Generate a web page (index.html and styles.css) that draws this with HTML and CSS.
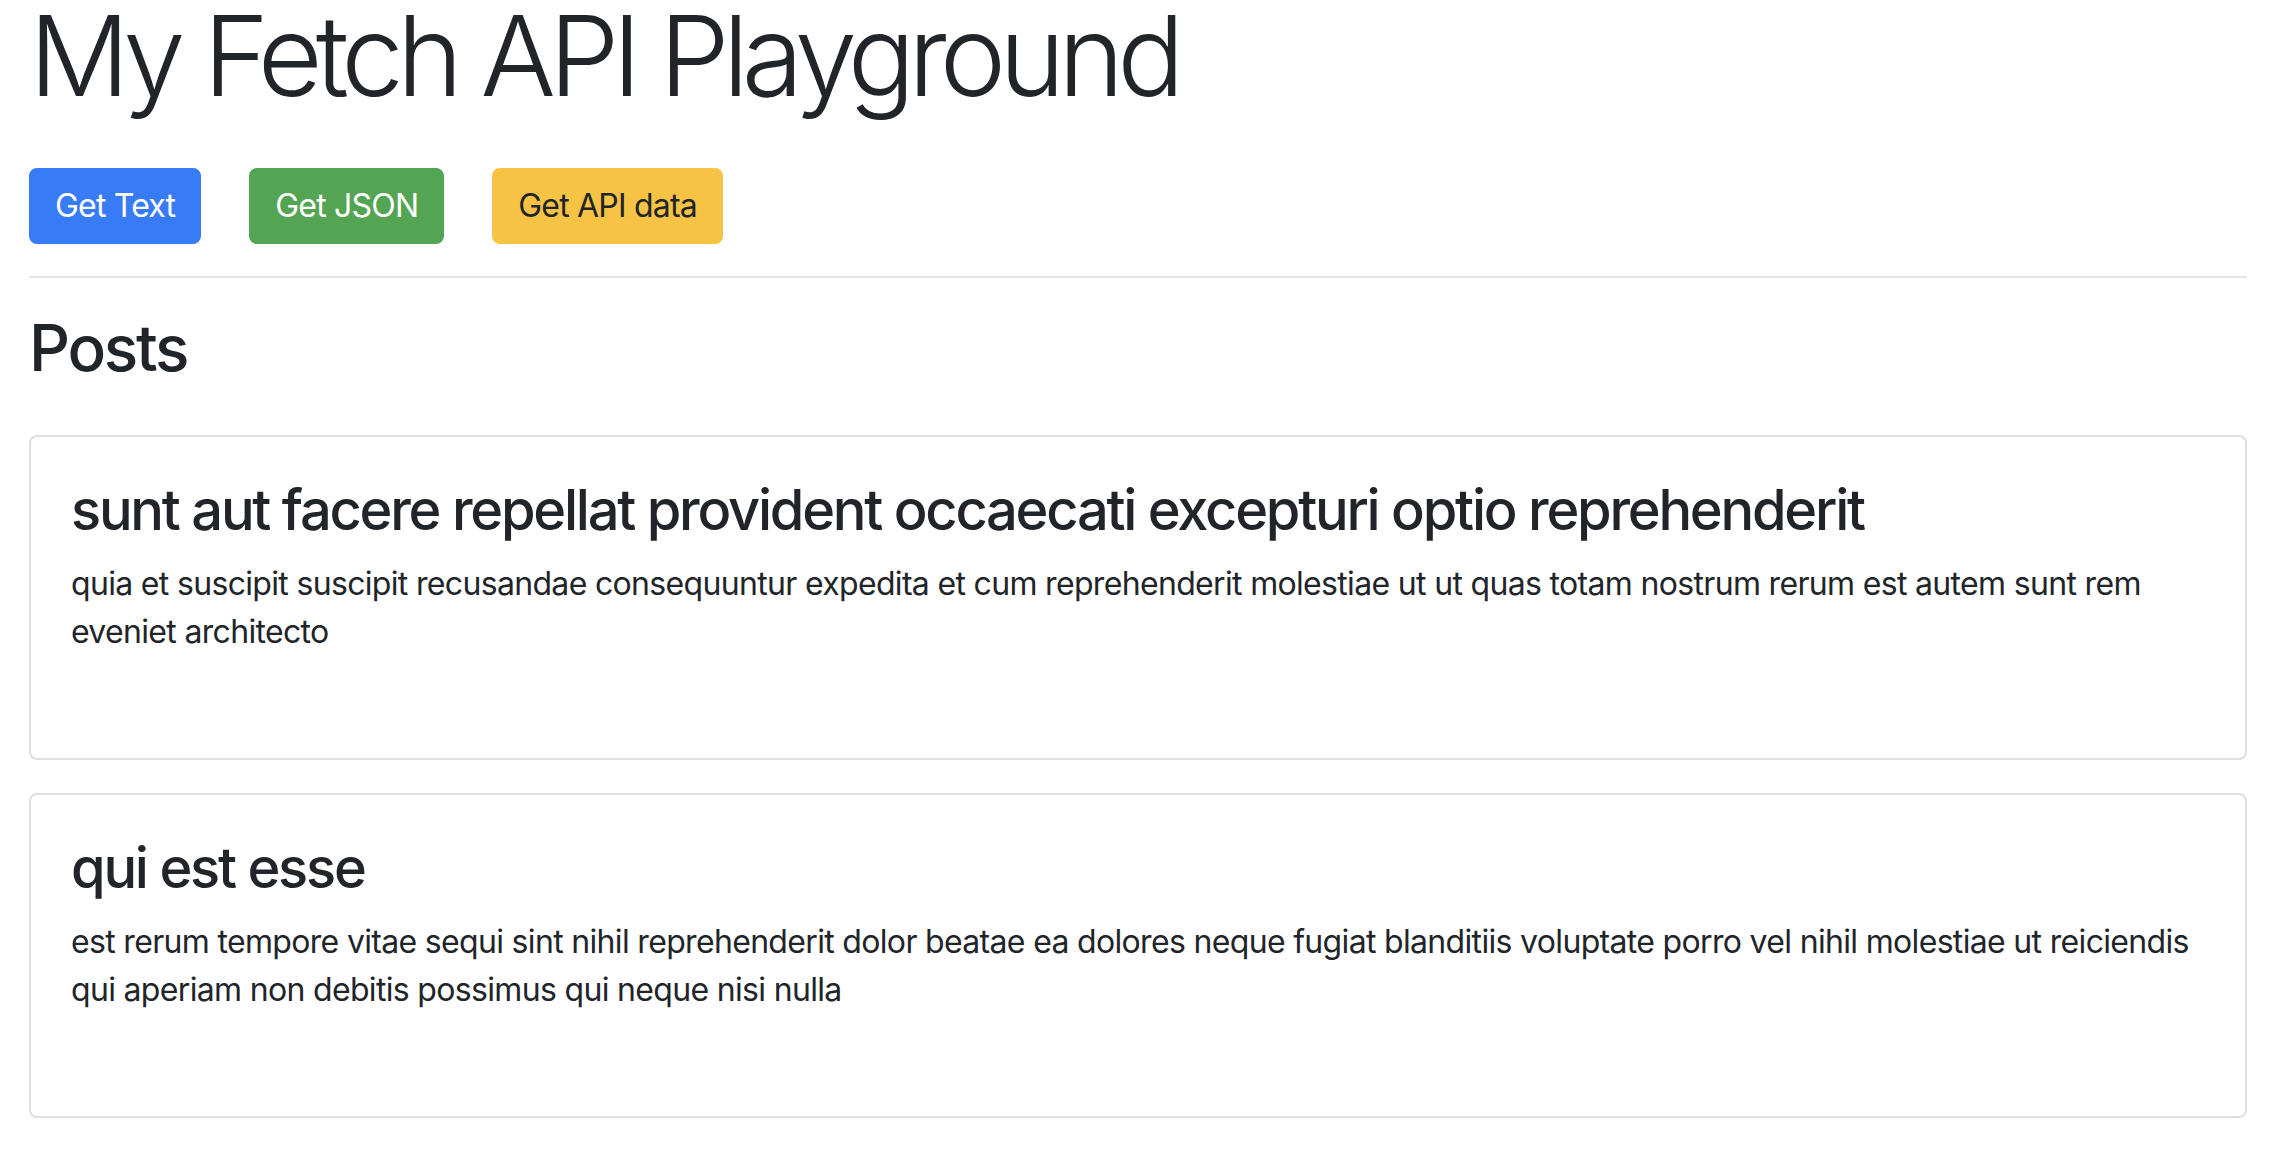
FILE: index.html
```html
<!DOCTYPE html>
<html lang="en">
<head>
<meta charset="utf-8">
<title>My Fetch API Playground</title>
<link rel="stylesheet" href="styles.css">
</head>
<body>
<div class="container">
  <h1 class="display">My Fetch API Playground</h1>
  <div class="actions">
    <button class="btn btn-primary">Get Text</button>
    <button class="btn btn-success">Get JSON</button>
    <button class="btn btn-warning">Get API data</button>
  </div>
  <hr class="divider">
  <h2 class="section-title">Posts</h2>
  <div class="posts">
    <div class="card">
      <h3 class="card-title">sunt aut facere repellat provident occaecati excepturi optio reprehenderit</h3>
      <p class="card-text">quia et suscipit suscipit recusandae consequuntur expedita et cum reprehenderit molestiae ut ut quas totam nostrum rerum est autem sunt rem eveniet architecto</p>
    </div>
    <div class="card">
      <h3 class="card-title">qui est esse</h3>
      <p class="card-text">est rerum tempore vitae sequi sint nihil reprehenderit dolor beatae ea dolores neque fugiat blanditiis voluptate porro vel nihil molestiae ut reiciendis qui aperiam non debitis possimus qui neque nisi nulla</p>
    </div>
  </div>
</div>
</body>
</html>
```

FILE: styles.css
```css
html, body {
  margin: 0;
  padding: 0;
  background: #ffffff;
}

body {
  font-family: Inter, "Noto Sans", "Liberation Sans", sans-serif;
  font-size: 32px;
  line-height: 48px;
  letter-spacing: -0.021em;
  color: #212529;
}

.container {
  padding: 0 29px;
}

.display {
  margin: 0 0 58px;
  font-size: 112px;
  font-weight: 300;
  line-height: 110px;
  letter-spacing: -0.062em;
  white-space: nowrap;
}

.actions {
  display: flex;
  gap: 48px;
}

.btn {
  font-family: inherit;
  font-size: 32px;
  line-height: 48px;
  font-weight: 400;
  letter-spacing: -0.025em;
  padding: 12px 24px;
  border: 2px solid transparent;
  border-radius: 8px;
  cursor: pointer;
}

.btn-primary {
  background: #387bf6;
  border-color: #387bf6;
  color: #ffffff;
}

.btn-success {
  background: #53a553;
  border-color: #53a553;
  color: #ffffff;
}

.btn-warning {
  background: #f6c344;
  border-color: #f6c344;
  color: #212529;
}

.divider {
  margin: 32px 0;
  height: 0;
  border: 0;
  border-top: 2px solid #e6e6e6;
}

.section-title {
  margin: 0 0 48px;
  font-size: 64px;
  font-weight: 500;
  line-height: 76.8px;
  letter-spacing: -0.035em;
}

.card {
  border: 2px solid #dfdfdf;
  border-radius: 8px;
  padding: 40px 40px 70px;
  margin-bottom: 33px;
}

.card-title {
  margin: 0 0 16px;
  font-size: 56px;
  font-weight: 500;
  line-height: 67.2px;
  letter-spacing: -0.04em;
}

.card-text {
  margin: 0 0 32px;
}
```
